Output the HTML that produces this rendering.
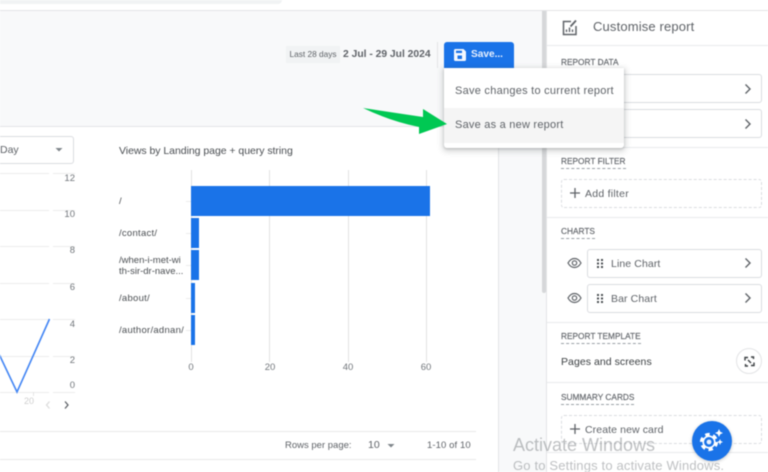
<!DOCTYPE html>
<html><head><meta charset="utf-8">
<style>
html,body{margin:0;padding:0;width:768px;height:472px;overflow:hidden;background:#fff}
#r{position:absolute;left:0;top:0;width:768px;height:472px;overflow:hidden;font-family:"Liberation Sans",sans-serif;color:#3c4043;filter:blur(.4px);background:#f8f9fa}
#r div,#r span,#r svg{position:absolute}
.t{white-space:nowrap;line-height:14px}
.lab{font-size:8.3px;-webkit-text-stroke:.15px #5f6368;color:#5f6368;left:561px;white-space:nowrap;line-height:12px;border-bottom:1px dashed #9aa0a6;padding-bottom:1px}
.row{background:#fff;border:1px solid #dadce0;border-radius:3px;box-sizing:border-box}
.dash{background:#fff;border:1px dashed #dadce0;border-radius:3px;box-sizing:border-box;left:561px;width:201px;height:29px}
.div{left:547px;width:221px;height:1px;background:#e8eaed}
.gy{left:0;width:49px;height:1px;background:#ececec}
.gy2{left:53px;width:22px;height:1px;background:#ececec}
.yl{left:55px;width:20px;text-align:right;font-size:9.5px;color:#70757a;line-height:12px}
.gx{top:170px;width:1px;height:192px;background:#e2e2e2}
.bar{left:191px;background:#1a73e8;height:30px}
.tk{left:186px;width:5px;height:1px;background:#ececec}
.bl{left:119px;font-size:9.5px;letter-spacing:.27px;color:#4a4e52;line-height:11px;white-space:nowrap}
.xl{font-size:9.5px;color:#70757a;top:362px;line-height:12px;width:20px;text-align:center}
</style></head><body>
<div id="r">
<div style="left:0;top:0;width:768px;height:10px;background:#fff"></div>
<div style="left:0;top:0;width:282px;height:4px;background:#f1f3f4;border-radius:0 0 4px 0"></div>
<div style="left:0;top:10px;width:768px;height:1px;background:#e3e4e6"></div>

<!-- card -->
<div style="left:0;top:126px;width:499px;height:346px;background:#fff;border-top:1px solid #e3e4e6;border-right:1px solid #e3e4e6;box-sizing:border-box"></div>

<!-- day select -->
<div style="left:-10px;top:136px;width:84px;height:28px;border:1px solid #dadce0;border-radius:3px;box-sizing:border-box;background:#fff"></div>
<div class="t" style="left:0;top:143px;font-size:10.5px;color:#5f6368">Day</div>
<svg style="left:54px;top:147px" width="10" height="6"><path d="M1.500 1h7L5 4.500z" fill="#80868b"/></svg>

<!-- line chart -->
<div class="gy" style="top:173px"></div><div class="gy2" style="top:173px"></div>
<div class="gy" style="top:210px"></div><div class="gy2" style="top:210px"></div>
<div class="gy" style="top:246px"></div><div class="gy2" style="top:246px"></div>
<div class="gy" style="top:283px"></div><div class="gy2" style="top:283px"></div>
<div class="gy" style="top:319px"></div><div class="gy2" style="top:319px"></div>
<div class="gy" style="top:356px"></div><div class="gy2" style="top:356px"></div>
<div class="gy" style="top:392px"></div><div class="gy2" style="top:392px"></div>
<div style="left:33px;top:392px;width:1px;height:4px;background:#e6e6e6"></div>
<div class="yl" style="top:173px">12</div>
<div class="yl" style="top:209px">10</div>
<div class="yl" style="top:245px">8</div>
<div class="yl" style="top:282px">6</div>
<div class="yl" style="top:319px">4</div>
<div class="yl" style="top:355px">2</div>
<div class="yl" style="top:380px">0</div>
<svg style="left:0;top:310px" width="60" height="90"><path d="M-1 44 L17 82 L49.500 9" fill="none" stroke="#4285f4" stroke-width="1.600"/></svg>
<div class="t" style="left:24px;top:394px;font-size:9px;color:#cfcfcf">20</div>
<svg style="left:42px;top:399px" width="30" height="12"><path d="M7.500 2.500L4.500 6l3 3.500" fill="none" stroke="#dcdcdc" stroke-width="1.300"/><path d="M23 2.500l3 3.500-3 3.500" fill="none" stroke="#5f6368" stroke-width="1.300"/></svg>

<!-- bar chart -->
<div class="t" style="left:119px;top:144px;font-size:10.5px;letter-spacing:-.04px;color:#4a4e52">Views by Landing page + query string</div>
<div class="gx" style="left:191px"></div>
<div class="gx" style="left:269px"></div>
<div class="gx" style="left:348px"></div>
<div class="gx" style="left:426px"></div>
<div class="tk" style="top:201px"></div><div class="tk" style="top:233px"></div><div class="tk" style="top:265px"></div><div class="tk" style="top:298px"></div><div class="tk" style="top:330px"></div>
<div class="bar" style="top:186px;width:239px"></div>
<div class="bar" style="top:218px;width:8px"></div>
<div class="bar" style="top:250px;width:8px"></div>
<div class="bar" style="top:283px;width:4px"></div>
<div class="bar" style="top:315px;width:4px"></div>
<div class="bl" style="top:196px">/</div>
<div class="bl" style="top:228px">/contact/</div>
<div class="bl" style="top:255px;letter-spacing:0">/when-i-met-wi<br>th-sir-dr-nave...</div>
<div class="bl" style="top:293px">/about/</div>
<div class="bl" style="top:325px">/author/adnan/</div>
<div class="xl" style="left:181px">0</div>
<div class="xl" style="left:260px">20</div>
<div class="xl" style="left:338px">40</div>
<div class="xl" style="left:416px">60</div>

<!-- table footer -->
<div style="left:0;top:431px;width:476px;height:1px;background:#e8e8e8"></div>
<div style="left:0;top:459px;width:476px;height:1px;background:#e8e8e8"></div>
<div class="t" style="left:285px;top:439px;font-size:9.5px;letter-spacing:0;color:#5f6368">Rows per page:</div>
<div class="t" style="left:368px;top:438px;font-size:10.5px;color:#5f6368">10</div>
<svg style="left:386px;top:443px" width="10" height="6"><path d="M1.500 1h7L5 4.500z" fill="#80868b"/></svg>
<div class="t" style="left:427px;top:439px;font-size:9.5px;letter-spacing:.1px;color:#5f6368">1-10 of 10</div>

<!-- header controls -->
<div style="left:437px;top:42px;width:1px;height:26px;background:#e3e4e6"></div>
<div class="t" style="left:286px;top:46px;width:54px;height:17px;line-height:17px;background:#f1f3f4;font-size:8.3px;color:#5f6368;text-align:center">Last 28 days</div>
<div class="t" style="left:343px;top:48px;font-size:10.3px;font-weight:bold;letter-spacing:0;color:#5f6368">2 Jul - 29 Jul 2024</div>
<div style="left:444px;top:42px;width:70px;height:27px;background:#1a73e8;border-radius:3px 3px 0 0"></div>
<svg style="left:453px;top:48px" width="14" height="14" viewBox="0 0 14 14"><path d="M1 2.500A1.500 1.500 0 0 1 2.500 1H10.500L13 3.500V11.500A1.500 1.500 0 0 1 11.500 13H2.500A1.500 1.500 0 0 1 1 11.500Z" fill="#f4f8fe"/><rect x="3" y="2.700" width="6" height="2.300" fill="#1a73e8"/><rect x="4.500" y="7.500" width="4.500" height="3.500" fill="#1a73e8"/></svg>
<div class="t" style="left:471px;top:48px;font-size:10.1px;font-weight:bold;color:#e8f0fe">Save...</div>

<!-- scrollbar & panel -->
<div style="left:546px;top:11px;width:222px;height:461px;background:#fff;border-left:1px solid #e3e4e6;box-sizing:border-box"></div>
<div style="left:542px;top:11px;width:4px;height:282px;background:#d6d7d9;border-radius:0 0 2px 2px"></div>

<svg style="left:561px;top:19px" width="17" height="17" viewBox="0 0 17 17" fill="none" stroke="#5f6368" stroke-width="1.500"><path d="M10 2.500H2.500V15.500H15V7"/><path d="M5.500 13V10.500M8.500 13V8.500M11.500 13V10.500" stroke-width="1.400"/><path d="M9.500 7.500L15 1.500" stroke-width="1.800"/></svg>
<div class="t" style="left:593px;top:20px;font-size:13px;letter-spacing:.15px;color:#5f6368">Customise report</div>
<div class="div" style="top:45px"></div>

<div class="lab" style="top:56px;border:0">REPORT DATA</div>
<div class="row" style="left:561px;top:74px;width:201px;height:29px"></div>
<div class="row" style="left:561px;top:109px;width:201px;height:29px"></div>
<svg style="left:742px;top:82px" width="12" height="14"><path d="M3.500 2.500L8 7 3.500 11.500" fill="none" stroke="#5f6368" stroke-width="1.400"/></svg>
<svg style="left:742px;top:117px" width="12" height="14"><path d="M3.500 2.500L8 7 3.500 11.500" fill="none" stroke="#5f6368" stroke-width="1.400"/></svg>
<div class="div" style="top:147px"></div>

<div class="lab" style="top:155px">REPORT FILTER</div>
<div class="dash" style="top:179px"></div>
<svg style="left:569px;top:187px" width="12" height="12"><path d="M6 1v10M1 6h10" stroke="#5f6368" stroke-width="1.300"/></svg>
<div class="t" style="left:585px;top:187px;font-size:10.5px;letter-spacing:.25px;color:#5f6368">Add filter</div>
<div class="div" style="top:217px"></div>

<div class="lab" style="top:225px">CHARTS</div>
<svg style="left:567px;top:257px" width="15" height="12" viewBox="0 0 15 12" fill="none" stroke="#5f6368" stroke-width="1.200"><path d="M1 6C3 2.500 5 1.500 7.500 1.500S12 2.500 14 6C12 9.500 10 10.500 7.500 10.500S3 9.500 1 6Z"/><circle cx="7.500" cy="6" r="2.200"/></svg>
<svg style="left:567px;top:292px" width="15" height="12" viewBox="0 0 15 12" fill="none" stroke="#5f6368" stroke-width="1.200"><path d="M1 6C3 2.500 5 1.500 7.500 1.500S12 2.500 14 6C12 9.500 10 10.500 7.500 10.500S3 9.500 1 6Z"/><circle cx="7.500" cy="6" r="2.200"/></svg>
<div class="row" style="left:587px;top:249px;width:175px;height:29px"></div>
<div class="row" style="left:587px;top:284px;width:175px;height:29px"></div>
<svg style="left:597px;top:259px" width="7" height="11" fill="#4a4e52"><rect x="0" y="0" width="2" height="2"/><rect x="4" y="0" width="2" height="2"/><rect x="0" y="3.500" width="2" height="2"/><rect x="4" y="3.500" width="2" height="2"/><rect x="0" y="7" width="2" height="2"/><rect x="4" y="7" width="2" height="2"/></svg>
<svg style="left:597px;top:294px" width="7" height="11" fill="#4a4e52"><rect x="0" y="0" width="2" height="2"/><rect x="4" y="0" width="2" height="2"/><rect x="0" y="3.500" width="2" height="2"/><rect x="4" y="3.500" width="2" height="2"/><rect x="0" y="7" width="2" height="2"/><rect x="4" y="7" width="2" height="2"/></svg>
<div class="t" style="left:611px;top:257px;font-size:10.5px;letter-spacing:.1px;color:#5f6368">Line Chart</div>
<div class="t" style="left:611px;top:292px;font-size:10.5px;letter-spacing:.1px;color:#5f6368">Bar Chart</div>
<svg style="left:742px;top:256px" width="12" height="14"><path d="M3.500 2.500L8 7 3.500 11.500" fill="none" stroke="#5f6368" stroke-width="1.400"/></svg>
<svg style="left:742px;top:291px" width="12" height="14"><path d="M3.500 2.500L8 7 3.500 11.500" fill="none" stroke="#5f6368" stroke-width="1.400"/></svg>
<div class="div" style="top:322px"></div>

<div class="lab" style="top:330px">REPORT TEMPLATE</div>
<div class="t" style="left:561px;top:355px;font-size:10.5px;letter-spacing:.05px;color:#3c4043">Pages and screens</div>
<div style="left:736px;top:348px;width:26px;height:26px;border:1px solid #e3e4e6;border-radius:50%;box-sizing:border-box;background:#fff"></div>
<svg style="left:743px;top:355px" width="13" height="13" viewBox="0 0 13 13" fill="none" stroke="#3c4043" stroke-width="1.400"><path d="M2 5.500V2.500H5M8 2H10.500V4M11 7.500V10.500H8M5 11H2.500V9M5 5L8 8"/></svg>
<div class="div" style="top:382px"></div>

<div class="lab" style="top:391px">SUMMARY CARDS</div>
<div class="dash" style="top:415px"></div>
<svg style="left:569px;top:423px" width="12" height="12"><path d="M6 1v10M1 6h10" stroke="#5f6368" stroke-width="1.300"/></svg>
<div class="t" style="left:585px;top:423px;font-size:10.5px;letter-spacing:.1px;color:#5f6368">Create new card</div>
<div class="div" style="top:452px"></div>

<!-- dropdown menu -->
<div style="left:444px;top:68px;width:180px;height:80px;background:#fff;border-radius:0 0 3px 3px;box-shadow:0 2px 6px 2px rgba(60,64,67,.18),0 1px 2px rgba(60,64,67,.25)"></div>
<div style="left:444px;top:108px;width:180px;height:35px;background:#f5f5f5"></div>
<div class="t" style="left:455px;top:84px;font-size:11px;letter-spacing:.26px;color:#5f6368">Save changes to current report</div>
<div class="t" style="left:455px;top:118px;font-size:11px;letter-spacing:.23px;color:#5f6368">Save as a new report</div>

<!-- green arrow -->
<svg style="left:360px;top:104px" width="92" height="34"><path d="M3 4Q33 8.500 63 13L63 5 87 20 59 30 59 23Q30 17 3 4Z" fill="#00c853"/></svg>

<!-- FAB -->
<div style="left:692px;top:421px;width:40px;height:40px;border-radius:50%;background:#1a73e8;box-shadow:0 1px 3px rgba(60,64,67,.3)"></div>
<svg style="left:696px;top:426px" width="32" height="30" viewBox="0 0 32 30"><circle cx="13" cy="16" r="7.700" fill="none" stroke="#fff" stroke-width="2.800" stroke-dasharray="4.500 3.560"/><circle cx="13" cy="16" r="5.800" fill="#1a73e8" stroke="#fff" stroke-width="1.600"/><circle cx="13" cy="16" r="2.400" fill="#e8f0fe"/><path d="M23 3l1.200 2.800L27 7l-2.800 1.200L23 11l-1.200-2.800L19 7l2.800-1.200zM24 13l.9 2.100L27 16l-2.100.9L24 19l-.9-2.100L21 16l2.100-.9z" fill="#fff"/></svg>

<!-- activation watermark -->
<div class="t" style="left:513px;top:435px;font-size:18px;line-height:20px;color:rgba(110,115,120,.45)">Activate Windows</div>
<div class="t" style="left:513px;top:458px;font-size:13px;letter-spacing:.17px;line-height:15px;color:rgba(110,115,120,.45)">Go to Settings to activate Windows.</div>
</div>
</body></html>
